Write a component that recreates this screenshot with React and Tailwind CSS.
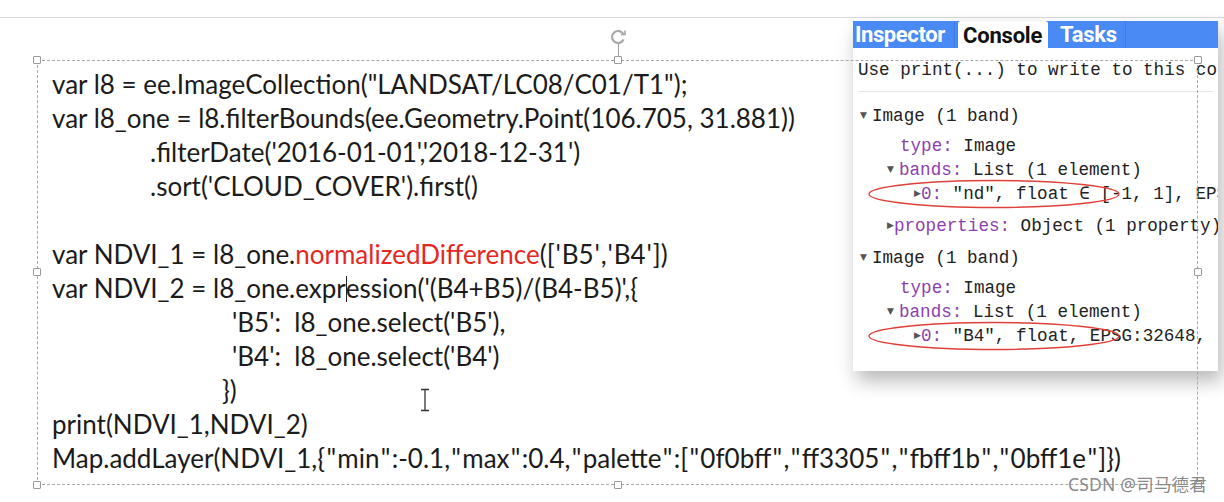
import React from "react";

const codeFont = { fontFamily: "Lato, 'Open Sans', sans-serif" };
const monoFont = { fontFamily: "'Liberation Mono', 'DejaVu Sans Mono', monospace" };

function Handle({ className }) {
  return <div className={"absolute w-[8px] h-[8px] border border-[#9a9a9a] bg-white rounded-[1px] " + className} />;
}

function Tri({ open }) {
  return (
    <span className="inline-block w-[12px] text-[9px] text-[#555] align-middle" style={{ fontFamily: "'DejaVu Sans', sans-serif" }}>
      {open ? "▼" : "▶"}
    </span>
  );
}

function Key({ children }) {
  return <span className="text-[#8d3fb0]">{children}</span>;
}

function ConsoleRow({ indent, children }) {
  return (
    <div className="h-[24px] flex items-center whitespace-nowrap" style={{ paddingLeft: indent }}>
      {children}
    </div>
  );
}

function Ellipse({ top }) {
  return (
    <svg className="absolute left-[14px]" style={{ top }} width="254" height="32" viewBox="0 0 254 32">
      <ellipse cx="127" cy="16" rx="125" ry="13.5" fill="none" stroke="#e0403a" strokeWidth="1.4" />
    </svg>
  );
}

// widen double quotes (Calibri-like proportions)
function DQ({ text }) {
  const parts = text.split('"');
  const out = [];
  parts.forEach((p, i) => {
    out.push(<React.Fragment key={"t" + i}>{p}</React.Fragment>);
    if (i < parts.length - 1) out.push(<span key={"q" + i} className="mx-[1.3px]">"</span>);
  });
  return <>{out}</>;
}

function SQ() {
  return <span className="mx-[0.9px]">'</span>;
}

export default function App() {
  return (
    <div className="relative w-[1224px] h-[502px] bg-white overflow-hidden">
      {/* top divider */}
      <div className="h-[18px] border-b border-[#d9d9d9]" />

      {/* code block */}
      <div className="pl-[52px] pt-[49px] text-[26px] leading-[34px] text-[#1b1b1b] whitespace-pre" style={codeFont}>
        <div>var l8 = ee.ImageCollection("LANDSAT/LC08/C01/T1");</div>
        <div>var l8_one = l8.filterBounds(ee.Geometry.Point(106.705, 31.881))</div>
        <div className="pl-[98px]">.filterDate('2016-01-01','2018-12-31')</div>
        <div className="pl-[98px]">.sort('CLOUD_COVER').first()</div>
        <div>&nbsp;</div>
        <div>
          var NDVI_1 = l8_one.<span className="text-[#e5281f]">normalizedDifference</span>([<SQ />B5<SQ />,<SQ />B4<SQ />])
        </div>
        <div>
          var NDVI_2 = l8_one.expr<span className="relative"><span className="absolute left-0 top-[4px] w-[1px] h-[26px] bg-[#222]" /></span>ession('(B4+B5)/(B4-B5)',{"{"}
        </div>
        <div className="pl-[180px]">'B5':  l8_one.select('B5'),</div>
        <div className="pl-[180px]">'B4':  l8_one.select('B4')</div>
        <div className="pl-[170px]">{"})"}</div>
        <div>print(NDVI_1,NDVI_2)</div>
        <div>
          <DQ text={'Map.addLayer(NDVI_1,{"min":-0.1,"max":0.4,"palette":["0f0bff","ff3305","fbff1b","0bff1e"]})'} />
        </div>
      </div>

      {/* I-beam mouse cursor */}
      <svg className="absolute left-[419px] top-[388px]" width="12" height="24" viewBox="0 0 12 24">
        <path d="M2 1.5 H10 M6 1.5 V22.5 M2 22.5 H10" stroke="#333" strokeWidth="1.3" fill="none" />
      </svg>

      {/* console panel */}
      <div className="absolute left-[853px] top-[21px] w-[365px] h-[350px] bg-white shadow-[4px_10px_18px_rgba(0,0,0,0.28)] overflow-hidden">
        <div className="h-[27px] bg-[#4a8af4] flex items-end pl-[2px] gap-[3px]" style={{ fontFamily: "Roboto, Arial, sans-serif" }}>
          <div className="w-[100px] h-[27px] flex items-center text-white font-bold text-[22px] tracking-[-0.4px] border-r border-[#3f7be0]">Inspector</div>
          <div className="w-[90px] h-[29px] -mb-[2px] pl-[5px] bg-white flex items-center text-[#111] font-bold text-[22px] tracking-[-0.2px] rounded-t-[3px]">Console</div>
          <div className="w-[74px] h-[27px] ml-[1px] pl-[8px] flex items-center text-white font-bold text-[22px] tracking-[-0.3px] border-r border-[#3f7be0]">Tasks</div>
        </div>
        <div className="relative text-[17.6px] text-[#222]" style={monoFont}>
          <div className="h-[43px] pl-[5px] pt-[11px] whitespace-nowrap leading-[22px]">Use print(...) to write to this console.</div>
          <div className="mx-[5px] border-t border-[#e6e6e6]" />
          <div className="pt-[12px] pl-[5px]">
            <ConsoleRow indent={2}><Tri open />Image (1 band)</ConsoleRow>
            <div className="h-[6px]" />
            <ConsoleRow indent={42}><Key>type:</Key>&nbsp;Image</ConsoleRow>
            <ConsoleRow indent={29}><Tri open /><Key>bands:</Key>&nbsp;List (1 element)</ConsoleRow>
            <ConsoleRow indent={56}><Tri /><Key>0:</Key>&nbsp;"nd", float ∈ [-1, 1], EPSG:32648</ConsoleRow>
            <div className="h-[8px]" />
            <ConsoleRow indent={29}><Tri /><Key>properties:</Key>&nbsp;Object (1 property)</ConsoleRow>
            <div className="h-[8px]" />
            <ConsoleRow indent={2}><Tri open />Image (1 band)</ConsoleRow>
            <div className="h-[6px]" />
            <ConsoleRow indent={42}><Key>type:</Key>&nbsp;Image</ConsoleRow>
            <ConsoleRow indent={29}><Tri open /><Key>bands:</Key>&nbsp;List (1 element)</ConsoleRow>
            <ConsoleRow indent={56}><Tri /><Key>0:</Key>&nbsp;"B4", float, EPSG:32648, [0, 0, 0]</ConsoleRow>
          </div>
          <Ellipse top={130} />
          <Ellipse top={272} />
        </div>
      </div>

      {/* selection frame overlay */}
      <div className="absolute left-[37px] top-[60px] w-[1161px] h-[425px] border border-dashed border-[#a8a8a8] pointer-events-none">
        <Handle className="-left-[5px] -top-[5px]" />
        <Handle className="left-[576px] -top-[5px]" />
        <Handle className="-right-[5px] -top-[5px]" />
        <Handle className="-left-[5px] top-[207px]" />
        <Handle className="-right-[5px] top-[207px]" />
        <Handle className="-left-[5px] -bottom-[5px]" />
        <Handle className="left-[576px] -bottom-[5px]" />
        <Handle className="-right-[5px] -bottom-[5px]" />
        <div className="absolute left-[580px] -top-[17px] w-[1px] h-[12px] bg-[#a0a0a0]" />
        <svg className="absolute left-[572px] -top-[33px]" width="18" height="18" viewBox="0 0 18 18">
          <path d="M13.5 6.5 A6 6 0 1 0 13.5 11.5" fill="none" stroke="#a8a8a8" strokeWidth="2.2" />
          <path d="M11 6.5 H15 V2.5" fill="none" stroke="#a8a8a8" strokeWidth="1.6" />
        </svg>
      </div>

      {/* watermark */}
      <div className="absolute left-[1068px] top-[471px] text-[17.5px] text-[#8a8a8a] tracking-[0.2px]" style={{ fontFamily: "'Noto Sans', 'Noto Sans CJK SC', sans-serif" }}>
        CSDN @司马德君
      </div>
    </div>
  );
}
